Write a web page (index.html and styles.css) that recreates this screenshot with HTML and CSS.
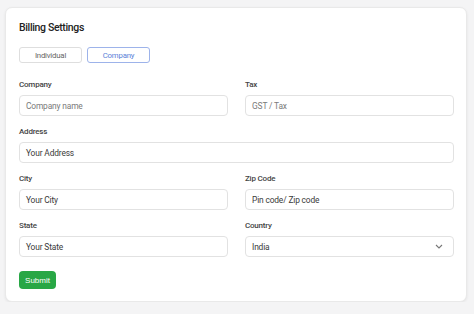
FILE: index.html
```html
<!DOCTYPE html>
<html>
<head>
<meta charset="utf-8">
<link rel="stylesheet" href="styles.css">
</head>
<body>
<div class="page">
  <form class="card">
    <h1 class="title">Billing Settings</h1>
    <div class="toggle">
      <button type="button" class="tbtn">Individual</button>
      <button type="button" class="tbtn active">Company</button>
    </div>
    <div class="grid">
      <div class="field">
        <label class="label">Company</label>
        <div class="input placeholder">Company name</div>
      </div>
      <div class="field">
        <label class="label">Tax</label>
        <div class="input placeholder">GST / Tax</div>
      </div>
      <div class="field wide">
        <label class="label">Address</label>
        <div class="input">Your Address</div>
      </div>
      <div class="field">
        <label class="label">City</label>
        <div class="input">Your City</div>
      </div>
      <div class="field">
        <label class="label">Zip Code</label>
        <div class="input">Pin code/ Zip code</div>
      </div>
      <div class="field">
        <label class="label">State</label>
        <div class="input">Your State</div>
      </div>
      <div class="field">
        <label class="label">Country</label>
        <div class="input select"><span>India</span>
          <svg class="chev" width="8" height="5" viewBox="0 0 8 5"><path d="M1 1 L4 4 L7 1" fill="none" stroke="#777" stroke-width="1.1"/></svg>
        </div>
      </div>
    </div>
    <button type="button" class="submit">Submit</button>
  </form>
</div>
</body>
</html>
```
FILE: styles.css
```css
html, body {
  margin: 0;
  padding: 0;
  background: #f4f4f5;
  font-family: Roboto, "Noto Sans", Arial, sans-serif;
}
.page {
  padding: 7px 7px 0 5px;
}
.card {
  display: block;
  background: #fff;
  border: 1px solid #e9e9e9;
  border-radius: 7px;
  box-shadow: 0 1px 3px rgba(0,0,0,0.07);
  padding: 12px 12px 12px 13px;
}
.title {
  margin: 0;
  font-size: 10.5px;
  line-height: 16px;
  font-weight: 500;
  letter-spacing: -0.35px;
  color: #222;
}
.toggle {
  display: flex;
  gap: 5px;
  margin-top: 11px;
}
.tbtn {
  width: 63px;
  height: 16px;
  padding: 0;
  border: 1px solid #dedede;
  border-radius: 3px;
  background: #fff;
  font-family: Roboto, Arial, sans-serif;
  font-size: 7.8px;
  letter-spacing: -0.2px;
  color: #666;
}
.tbtn.active {
  border-color: #9db3ea;
  color: #5b7fd8;
}
.grid {
  display: grid;
  grid-template-columns: 1fr 1fr;
  column-gap: 17px;
  row-gap: 10px;
  margin-top: 16px;
}
.field.wide {
  grid-column: 1 / 3;
}
.label {
  display: block;
  font-size: 8px;
  line-height: 11px;
  font-weight: 500;
  letter-spacing: -0.2px;
  color: #444;
  margin-bottom: 5px;
}
.input {
  box-sizing: border-box;
  height: 21px;
  border: 1px solid #e2e2e2;
  border-radius: 4px;
  padding: 0 6px;
  display: flex;
  align-items: center;
  font-size: 8.4px;
  letter-spacing: -0.15px;
  color: #3a3a3a;
}
.input.placeholder {
  color: #7a7a7a;
}
.select {
  justify-content: space-between;
  padding-right: 10px;
}
.submit {
  display: block;
  margin-top: 14px;
  width: 37px;
  height: 18px;
  padding: 0;
  border: none;
  border-radius: 4px;
  background: #28a745;
  color: #fff;
  font-family: "Liberation Sans", Arial, sans-serif;
  font-size: 8px;
  font-weight: 500;
}
```
